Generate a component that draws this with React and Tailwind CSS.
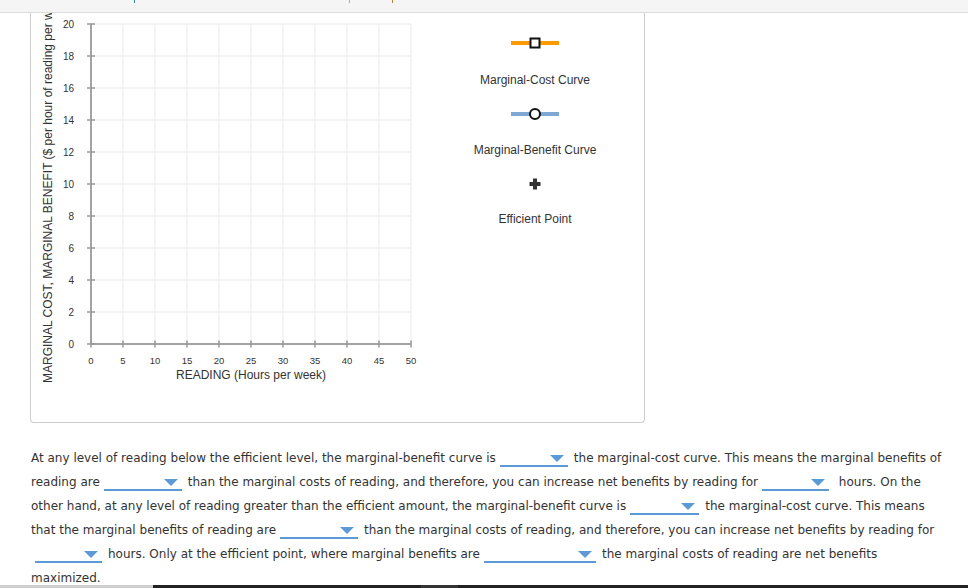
import React from "react";

const yTicks = [0, 2, 4, 6, 8, 10, 12, 14, 16, 18, 20];
const xTicks = [0, 5, 10, 15, 20, 25, 30, 35, 40, 45, 50];

function Chart() {
  const X0 = 91;
  const Y0 = 344;
  return (
    <svg width="430" height="409" className="block shrink-0">
      <g transform="translate(-31 -13)">
        {xTicks.map((t, i) => (
          <line key={"gv" + t} x1={X0 + i * 32} x2={X0 + i * 32} y1={24} y2={Y0} stroke="#f0f0f0" strokeWidth="1.5" />
        ))}
        {yTicks.map((t, i) => (
          <line key={"gh" + t} x1={X0} x2={411} y1={Y0 - i * 32} y2={Y0 - i * 32} stroke="#f0f0f0" strokeWidth="1.5" />
        ))}
        <line x1={X0} x2={X0} y1={24} y2={Y0} stroke="#a3a3a3" strokeWidth="2" />
        <line x1={X0} x2={411} y1={Y0} y2={Y0} stroke="#a3a3a3" strokeWidth="2" />
        {yTicks.map((t, i) => (
          <g key={"yt" + t}>
            <line x1={87} x2={95} y1={Y0 - i * 32} y2={Y0 - i * 32} stroke="#999" strokeWidth="1.5" />
            <text x={74} y={Y0 - i * 32 + 3.5} textAnchor="end" fontSize="10" fill="#333" fontFamily="'Liberation Sans', Arial, sans-serif">{t}</text>
          </g>
        ))}
        {xTicks.map((t, i) => (
          <g key={"xt" + t}>
            <line x1={X0 + i * 32} x2={X0 + i * 32} y1={340.5} y2={347.5} stroke="#999" strokeWidth="1.5" />
            <text x={X0 + i * 32} y={363.5} textAnchor="middle" fontSize="9.5" fill="#333" fontFamily="'Liberation Sans', Arial, sans-serif">{t}</text>
          </g>
        ))}
        <text x={251} y={378.5} textAnchor="middle" fontSize="12" fill="#333" fontFamily="'Liberation Sans', Arial, sans-serif">READING (Hours per week)</text>
        <text transform="translate(51.5 383) rotate(-90)" fontSize="12" fill="#333" fontFamily="'Liberation Sans', Arial, sans-serif">MARGINAL COST, MARGINAL BENEFIT ($ per hour of reading per week)</text>
      </g>
    </svg>
  );
}

function Legend() {
  return (
    <div className="w-[148px] flex flex-col items-center pt-[23px] text-[12px] leading-[14px] text-[#333]" style={{ fontFamily: "'Liberation Sans', Arial, sans-serif" }}>
      <svg width="50" height="14" className="block">
        <line x1="1" x2="49" y1="7" y2="7" stroke="#ff9b00" strokeWidth="4" />
        <rect x="20.5" y="2.5" width="9" height="9" fill="#fff" stroke="#111" strokeWidth="2" />
      </svg>
      <div className="mt-[23px]">Marginal-Cost Curve</div>
      <svg width="50" height="14" className="block mt-[20px]">
        <line x1="1" x2="49" y1="7" y2="7" stroke="#80a8d4" strokeWidth="4" />
        <circle cx="25" cy="7" r="5" fill="#fff" stroke="#111" strokeWidth="2" />
      </svg>
      <div className="mt-[22px]">Marginal-Benefit Curve</div>
      <svg width="14" height="14" className="block mt-[20px]">
        <path d="M5 1.5h4v3.5h3.5v4H9v3.5H5V9H1.5V5H5z" fill="#333" />
      </svg>
      <div className="mt-[21px]">Efficient Point</div>
    </div>
  );
}

function Drop({ w }) {
  return (
    <span className={`inline-block align-[-5px] h-[15px] border-b-2 border-[#5b9ad5] ml-[4px] mr-[6px] ${w}`}>
      <svg width="14" height="8" className="block ml-auto mr-[4px] mt-[3px]">
        <path d="M0 0h14L7 7z" fill="#5b9ad5" />
      </svg>
    </span>
  );
}

export default function App() {
  return (
    <div className="relative w-[968px] h-[588px] overflow-hidden bg-white">
      <div className="relative h-[13px] bg-[#f5f5f5] border-b border-[#dcdcdc]">
        <span className="absolute left-[134px] top-0 w-px h-[3px] bg-[#3d7fc1]" />
        <span className="absolute left-[349px] top-0 w-px h-[3px] bg-[#e0a060]" />
        <span className="absolute left-[392px] top-0 w-px h-[3px] bg-[#c08040]" />
      </div>
      <div className="ml-[30px] w-[615px] h-[410px] border-l border-r border-b border-[#cccccc] rounded-b-[4px] flex">
        <Chart />
        <Legend />
      </div>
      <div className="mt-[23px] ml-[31px] w-[914px] text-[12px] leading-[24px] text-[#333]" style={{ fontFamily: "'DejaVu Sans', Verdana, sans-serif" }}>
        At any level of reading below the efficient level, the marginal-benefit curve is<Drop w="w-[68px]" />the marginal-cost curve. This means the marginal benefits of reading are<Drop w="w-[78px]" />than the marginal costs of reading, and therefore, you can increase net benefits by reading for<Drop w="w-[67px]" /> hours. On the other hand, at any level of reading greater than the efficient amount, the marginal-benefit curve is<Drop w="w-[69px]" />the marginal-cost curve. This means that the marginal benefits of reading are<Drop w="w-[78px]" />than the marginal costs of reading, and therefore, you can increase net benefits by reading for<Drop w="w-[67px]" />hours. Only at the efficient point, where marginal benefits are<Drop w="w-[112px]" />the marginal costs of reading are net benefits maximized.
      </div>
      <div className="absolute left-0 bottom-0 w-full h-[3px] flex">
        <div className="w-[153px] bg-[#d0d0d0]" />
        <div className="w-[268px] bg-[#222]" />
        <div className="w-[37px] bg-[#333]" />
        <div className="flex-1 bg-[#222]" />
      </div>
    </div>
  );
}
